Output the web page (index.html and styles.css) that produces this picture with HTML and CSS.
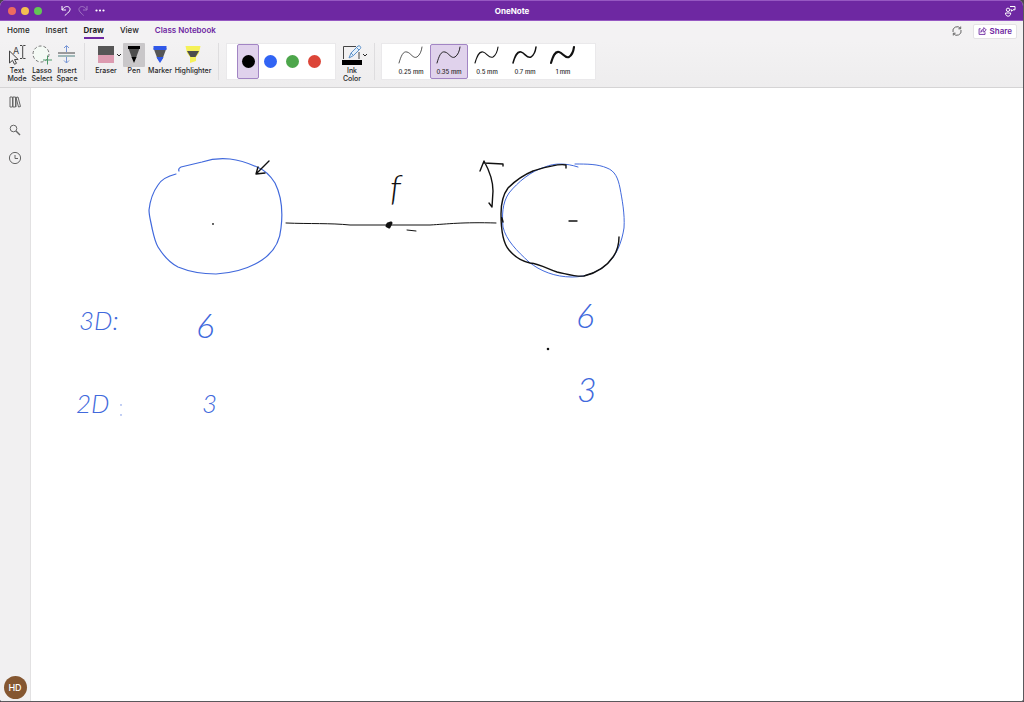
FILE: index.html
```
<!DOCTYPE html>
<html lang="en">
<head>
  <meta charset="UTF-8">
  <meta name="viewport" content="width=device-width, initial-scale=1.0">
  <title>OneNote</title>
  <link rel="stylesheet" href="styles.css">
</head>
<body>
  <div class="window">
    <header class="titlebar">
      <div class="title-left">
        <button class="light red" aria-label="Close"></button>
        <button class="light yellow" aria-label="Minimize"></button>
        <button class="light green" aria-label="Zoom"></button>
        <button class="title-btn undo" aria-label="Undo"><svg width="12" height="12" viewBox="0 0 12 12"><path d="M2 1v4h4M2 5C4 1.600 7.500 .6 9.300 2.500c2 2.200 0 4.500-4.500 8"/></svg></button>
        <button class="title-btn redo" aria-label="Redo" disabled><svg width="12" height="12" viewBox="0 0 12 12"><path d="M10 1v4H6M10 5C8 1.600 4.500 .6 2.700 2.500c-2 2.200 0 4.500 4 8"/></svg></button>
        <button class="title-btn more" aria-label="More"><svg width="12" height="12" viewBox="0 0 12 12"><g fill="currentColor" stroke="none"><circle cx="2.500" cy="5.500" r="1.100"/><circle cx="6" cy="5.500" r="1.100"/><circle cx="9.500" cy="5.500" r="1.100"/></g></svg></button>
      </div>
      <h1>OneNote</h1>
      <button class="title-btn feedback" aria-label="Feedback"><svg width="12" height="12" viewBox="0 0 12 12"><circle cx="4" cy="4.800" r="1.700"/><path d="M1.500 8h5.200c0 2-1 3.200-2.600 3.200S1.500 10 1.500 8zM6 1.500h5v3.300H9L7.500 6.300V4.800H6.500"/></svg></button>
    </header>

    <nav class="tabs">
      <a href="#">Home</a>
      <a href="#">Insert</a>
      <a href="#" class="active">Draw</a>
      <a href="#">View</a>
      <a href="#" class="class-notebook">Class Notebook</a>
      <button class="sync" aria-label="Sync"><svg width="12" height="12" viewBox="0 0 12 12"><path d="M2 7A4.200 4.200 0 0 1 9.500 3.500M9.700 1.500v2.300H7.400M10 5A4.200 4.200 0 0 1 2.500 8.500M2.300 10.500V8.200h2.300"/></svg></button>
      <button class="share"><svg width="9" height="10" viewBox="0 0 10 10"><path d="M3 2.500H1.200v6.300h6.600V6.500M3.200 6.500c0-2.500 1.300-3.500 3.300-3.500V1.200l2.700 2.700-2.700 2.500V4.700c-1.500 0-2.500.4-3.300 1.800z"/></svg>Share</button>
    </nav>

    <div class="ribbon">
      <div class="group modes">
        <button class="tool"><svg width="22" height="24" viewBox="0 0 22 24"><path class="dark" d="M3.500 8v12l3-2.700 2 4 2-1-2-3.800h3.700z"/><path class="dark" d="M14 2.500h2l.7.700.7-.700h2.100M16.700 3.200v11.600M14 15.500h2l.7-.7.7.7h2.100"/><text x="7" y="11">A</text></svg><span>Text Mode</span></button>
        <button class="tool"><svg width="22" height="24" viewBox="0 0 22 24"><circle class="lasso" cx="10" cy="11" r="8"/><path class="plus" d="M16.500 12.500v9M12 17h9"/></svg><span>Lasso Select</span></button>
        <button class="tool"><svg width="22" height="24" viewBox="0 0 22 24"><path class="blue" d="M10.500 9V3M8 5l2.500-2.500L13 5M10.500 14v6M8 17.500l2.500 2.500 2.500-2.500"/><path class="dark" d="M2 10h17"/><path class="teal" d="M2 13h17"/></svg><span>Insert Space</span></button>
      </div>
      <div class="group pens">
        <button class="tool"><svg width="22" height="24" viewBox="0 0 22 24"><path fill="#565656" d="M3 3h16v9H3z"/><path fill="#dc9bb0" d="M3 12h16v8H3z"/></svg><span>Eraser</span></button>
        <button class="chevron" aria-label="Eraser options"><svg width="6" height="6" viewBox="0 0 6 6"><path d="M1 2l2 2 2-2"/></svg></button>
        <button class="tool selected"><svg width="22" height="24" viewBox="0 0 22 24"><path fill="#4d4d4d" d="M5 4h12l-4 11h-4z"/><path fill="#000" d="M5 3h12v3H5zM8.500 14h5L11 20z"/></svg><span>Pen</span></button>
        <button class="tool"><svg width="22" height="24" viewBox="0 0 22 24"><path fill="#565656" d="M4.500 5h13l-4 11h-5z"/><path fill="#3058e8" d="M4.500 3h13v4h-13zM7.500 14h7l-1.500 3-2 3-2-3z"/></svg><span>Marker</span></button>
        <button class="tool wide"><svg width="22" height="24" viewBox="0 0 22 24"><path fill="#f5f158" d="M3.500 3h15l-1.500 7-3 4v4l-6 2v-6l-3-4z"/><path fill="#4d4d4d" d="M5 8h12l-3.500 6h-5z"/></svg><span>Highlighter</span></button>
      </div>
      <div class="group ink">
        <div class="panel colors">
          <button class="swatch selected" aria-label="Black"><i class="dot black"></i></button>
          <button class="swatch" aria-label="Blue"><i class="dot blue-dot"></i></button>
          <button class="swatch" aria-label="Green"><i class="dot green-dot"></i></button>
          <button class="swatch" aria-label="Red"><i class="dot red-dot"></i></button>
        </div>
        <button class="tool ink-color"><svg width="22" height="24" viewBox="0 0 22 24"><path class="dark" d="M15 3.500H2.500V16M18 9v7"/><path class="pencil" d="M8 15l2-5 7-7c1.500-1 3.500 1 2.500 2.500l-7 7zM10 10l2.500 2.500M15.500 4.500l2.500 2.500"/><path fill="#000" d="M1 17h20v5H1z"/></svg><span>Ink Color</span></button>
        <button class="chevron" aria-label="Ink color options"><svg width="6" height="6" viewBox="0 0 6 6"><path d="M1 2l2 2 2-2"/></svg></button>
      </div>
      <div class="group">
        <div class="panel widths">
          <button class="width"><svg width="26" height="20" viewBox="0 0 26 20"><path stroke-width=".7" d="M1 18C3 11 5 6 9 7s6 7 10 5c3-2 4.500-6 5-10"/></svg>0.25 mm</button>
          <button class="width selected"><svg width="26" height="20" viewBox="0 0 26 20"><path stroke-width=".9" d="M1 18C3 11 5 6 9 7s6 7 10 5c3-2 4.500-6 5-10"/></svg>0.35 mm</button>
          <button class="width"><svg width="26" height="20" viewBox="0 0 26 20"><path stroke-width="1.100" d="M1 18C3 11 5 6 9 7s6 7 10 5c3-2 4.500-6 5-10"/></svg>0.5 mm</button>
          <button class="width"><svg width="26" height="20" viewBox="0 0 26 20"><path stroke-width="1.500" d="M1 18C3 11 5 6 9 7s6 7 10 5c3-2 4.500-6 5-10"/></svg>0.7 mm</button>
          <button class="width"><svg width="26" height="20" viewBox="0 0 26 20"><path stroke-width="2.100" d="M1 18C3 11 5 6 9 7s6 7 10 5c3-2 4.500-6 5-10"/></svg>1 mm</button>
        </div>
      </div>
    </div>

    <div class="workspace">
      <aside class="sidebar">
        <button aria-label="Notebooks"><svg width="14" height="14" viewBox="0 0 14 14"><path d="M2 2h2.500v10H2zM5 2h2.500v10H5zM8 2.500l2-.5 2.500 9.500-2 .5zM8 2.500V12"/></svg></button>
        <button aria-label="Search"><svg width="14" height="14" viewBox="0 0 14 14"><circle cx="5.500" cy="5.500" r="3.300"/><path stroke-width="1.400" d="M8 8l4 4"/></svg></button>
        <button aria-label="Recent notes"><svg width="14" height="14" viewBox="0 0 14 14"><circle cx="7" cy="7" r="5.600"/><path d="M7 4v3.500h3"/></svg></button>
        <button class="avatar">HD</button>
      </aside>
      <main class="page">
        <svg class="canvas">
          <g transform="translate(-31 -88)">
            <!-- blue ink -->
            <g class="ink-blue">
              <path d="M176 174C168 176 161 180 158 185C153 192 150 201 149 210C149 216 151 222 152 228C154 237 155 242 158 247C163 255 170 263 178 267C190 272 203 274 216 274C232 273 250 268 262 260C274 252 280 241 281 228C283 212 281 195 275 183C270 175 265 170 257 167C248 163 239 160 230 159C221 158 211 159 202 162L181 167C179 168 178 169 179 171"/>
              <path stroke-width="1" d="M578 167C566 163 554 163 545 167C531 171 518 182 509 193C502 203 502 216 503 227C506 240 517 251 529 262C540 271 555 277 572 277C587 277 597 272 606 265C617 256 622 241 624 228C625 214 622 199 620 188C618 178 615 171 607 168C598 164 587 164 575 164"/>
              <text class="hand" x="79" y="330">3D:</text>
              <text class="hand" x="76" y="413">2D</text>
              <circle cx="121" cy="405" r=".2"/>
              <circle cx="121" cy="415" r=".2"/>
              <text class="hand big" x="196" y="338">6</text>
              <text class="hand" x="202" y="413">3</text>
              <text class="hand big" x="576" y="328">6</text>
              <text class="hand big" x="577" y="402">3</text>
            </g>
            <!-- black ink -->
            <g class="ink-black">
              <path d="M269 161L257 173M258 167L256 174L265 173"/>
              <path class="thin" d="M286 223C310 224 330 223 350 225H430C448 224 462 222 496 223"/>
              <path d="M388 224l3-1-2 4-2-1z" fill="#000" stroke-width="3"/>
              <path class="thin" d="M407 230l9 1"/>
              <circle cx="213" cy="224" r=".3"/>
              <text class="hand letter-f" x="390" y="200">f</text>
              <path d="M480 171L484 161C489 170 493 179 493 191L492 207L489 203M484 163L503 164V166"/>
              <path d="M566 168V165C558 163 543 168 533 171C521 176 514 182 508 188C502 196 501 205 501 214C501 228 502 242 509 250C514 256 520 261 530 263C540 264 548 269 557 272C567 274 576 277 584 276C596 273 607 266 613 257C618 250 619 243 619 237M502 218l1 4"/>
              <path d="M569 221h8"/>
              <circle cx="548" cy="349" r=".6"/>
            </g>
          </g>
        </svg>
      </main>
    </div>
  </div>
</body>
</html>
```
FILE: styles.css
```
* { box-sizing: border-box; }
body { margin: 0; background: #4b4550; font-family: Inter, "Liberation Sans", sans-serif; color: #262626; }
button { font: inherit; color: inherit; background: none; border: 0; padding: 0; margin: 0; }
svg { display: block; fill: none; stroke: currentColor; overflow: visible; }

.window { display: flex; flex-direction: column; height: 100vh; border: solid #5a585c; border-width: 0 1px 1px 0; border-radius: 6px 6px 3px 3px; overflow: hidden; background: #f3f2f3; }

/* title bar */
.titlebar { display: grid; grid-template-columns: 1fr auto 1fr; align-items: center; height: 21px; padding: 0 7px 0 8px; background: #6e28a2; border-top: 1px solid #9658c2; border-bottom: 1px solid #9658c2; color: #fff; }
.titlebar h1 { margin: 0; font-size: 8px; font-weight: 700; }
.title-left { display: flex; align-items: center; gap: 5px; }
.light { width: 8px; height: 8px; border-radius: 50%; }
.red { background: #ed6b60; }
.yellow { background: #f5be50; }
.green { background: #62c655; }
.undo { margin-left: 13px; }
.redo { opacity: .35; }
.feedback { justify-self: end; }

/* tabs */
.tabs { display: flex; align-items: center; gap: 16px; height: 20px; padding: 0 6px 0 7px; font-size: 8px; font-weight: 500; }
.tabs a { color: inherit; text-decoration: none; line-height: 14px; border-bottom: 2px solid transparent; }
.tabs .active { font-weight: 700; border-color: #6e28a2; }
.tabs .class-notebook { color: #6e28a2; font-weight: 600; }
.sync { margin-left: auto; color: #666; }
.share { display: flex; align-items: center; gap: 3px; height: 15px; padding: 0 4px; margin-left: -6px; background: #fff; border: 1px solid #e4e2e5; border-radius: 2px; color: #6e28a2; font-weight: 600; }

/* ribbon */
.ribbon { display: flex; align-items: flex-start; height: 47px; padding-top: 2px; border-bottom: 1px solid #d5d4d5; background: linear-gradient(#f3f2f3, #eeedee); font-size: 7px; line-height: 8px; font-weight: 500; }
.group { display: flex; align-items: flex-start; height: 37px; padding: 0 6px; border-right: 1px solid #dedddf; }
.group:last-child { border: 0; }
.modes { gap: 1px; padding: 0 5px; }
.pens { gap: 2px; padding-left: 9px; }
.ink { padding: 0 8px 0 7px; }
.tool { display: flex; flex-direction: column; align-items: center; width: 24px; }
.tool svg { stroke: none; }
.tool.wide { width: 38px; }
.tool.selected svg { background: #c9c7c9; border-radius: 1px; }
.chevron { width: 6px; height: 24px; margin-left: -4px; margin-right: -2px; }
.tool .dark { stroke: #444; }
.tool .blue { stroke: #7795d5; }
.tool .teal { stroke: #4f8080; }
.tool .lasso { stroke: #777; stroke-dasharray: 3 2; fill: #f4faf5; }
.tool .plus { stroke: #4d9a68; }
.tool .pencil { stroke: #5e91c9; fill: #e4f0fa; }
.tool text { font-size: 9px; font-weight: 400; fill: #444; }
.panel { display: flex; align-items: center; height: 37px; background: #fff; border: 1px solid #eae9eb; }
.colors { padding: 0 10px; margin-right: 2px; }
.swatch { display: grid; place-items: center; width: 22px; height: 35px; border: 1px solid transparent; border-radius: 2px; }
.swatch.selected, .width.selected { background: #e0d2ec; border-color: #a285c4; }
.dot { width: 13px; height: 13px; border-radius: 50%; }
.black { background: #000; }
.blue-dot { background: #3164f4; }
.green-dot { background: #4da64b; }
.red-dot { background: #dc4538; }
.ink-color { width: 28px; }
.widths { padding: 0 13px 0 10px; }
.width { display: flex; flex-direction: column; align-items: center; gap: 3px; width: 38px; height: 35px; border: 1px solid transparent; border-radius: 2px; font-size: 6px; }
.width svg { stroke: #111; stroke-linecap: round; }

/* sidebar and page */
.workspace { display: flex; flex: 1; min-height: 0; }
.sidebar { display: flex; flex-direction: column; align-items: center; gap: 14px; width: 31px; padding: 7px 0 2px; background: #f1f0f1; border-right: 1px solid #e2e1e2; color: #666; }
.avatar { width: 23px; height: 23px; margin-top: auto; border-radius: 50%; background: #855731; color: #fff; font-size: 9px; font-weight: 500; }
.page { flex: 1; background: #fff; }
.canvas { width: 100%; height: 100%; stroke-linecap: round; stroke-linejoin: round; }
.ink-blue { stroke: #4169dc; stroke-width: 1.2; }
.ink-black { stroke: #111; stroke-width: 1.4; }
.thin { stroke-width: 1; }
.hand { font-family: Lato, sans-serif; font-size: 26px; font-weight: 300; font-style: italic; fill: #4169dc; stroke: none; }
.hand.big { font-size: 34px; }
.hand.letter-f { font-size: 36px; fill: #111; }
```
